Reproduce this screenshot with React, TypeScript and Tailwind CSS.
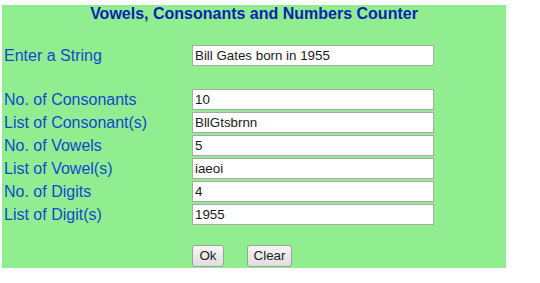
const rows: { label: string; value: string }[] = [
  { label: "No. of Consonants", value: "10" },
  { label: "List of Consonant(s)", value: "BllGtsbrnn" },
  { label: "No. of Vowels", value: "5" },
  { label: "List of Vowel(s)", value: "iaeoi" },
  { label: "No. of Digits", value: "4" },
  { label: "List of Digit(s)", value: "1955" },
];

function Field({ label, value }: { label: string; value: string }) {
  return (
    <div className="flex h-[21px] items-center">
      <label className="w-[190px] pl-[2px] text-[16px] leading-[18px] text-[#1148cf]">{label}</label>
      <input
        readOnly
        value={value}
        className="h-[21px] w-[242px] border border-[#a9a9a9] bg-white px-[2px] text-[13.33px] text-[#1a1a1a] outline-none"
      />
    </div>
  );
}

export default function App() {
  return (
    <div className="h-[283px] w-[540px] bg-white pt-[5px] pl-[2px] font-['Liberation_Sans',Arial,sans-serif]">
      <div className="flex h-[263px] w-[504px] flex-col bg-[#90ee90] pb-[1px]">
        <h1 className="h-[18px] text-center text-[16px] font-bold leading-[18px] text-[#0b23b4]">
          Vowels, Consonants and Numbers Counter
        </h1>

        <div className="mt-[22px]">
          <Field label="Enter a String" value="Bill Gates born in 1955" />
        </div>

        <div className="mt-[23px] flex flex-col gap-[2px]">
          {rows.map((r) => (
            <Field key={r.label} label={r.label} value={r.value} />
          ))}
        </div>

        <div className="mt-[20px] flex gap-[23px] pl-[190px]">
          <button className="h-[22px] w-[32px] rounded-[3px] border border-[#a0a0a0] bg-gradient-to-b from-[#f6f6f6] to-[#dedede] text-[13.33px] text-[#222]">
            Ok
          </button>
          <button className="h-[22px] w-[45px] rounded-[3px] border border-[#a0a0a0] bg-gradient-to-b from-[#f6f6f6] to-[#dedede] text-[13.33px] text-[#222]">
            Clear
          </button>
        </div>
      </div>
    </div>
  );
}
